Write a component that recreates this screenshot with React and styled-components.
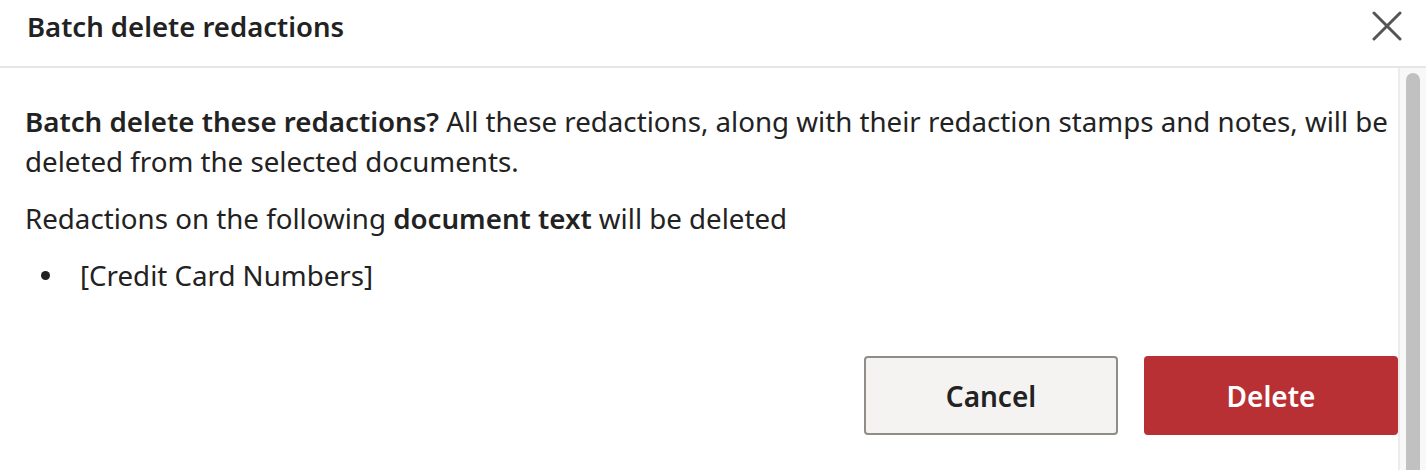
import * as React from 'react';
import styled, { createGlobalStyle } from 'styled-components';

const GlobalStyle = createGlobalStyle`
  html, body {
    margin: 0;
    padding: 0;
    background: #ffffff;
  }
  body {
    font-family: 'Noto Sans', 'Open Sans', sans-serif;
    color: #222222;
  }
`

const Dialog = styled.section`
  width: 1426px;
  height: 470px;
  display: flex;
  flex-direction: column;
  background: #ffffff;
  overflow: hidden;
`
const Header = styled.header`
  height: 68px;
  flex: none;
  display: flex;
  align-items: flex-start;
  justify-content: space-between;
  padding: 7px 22px 0 27px;
  box-sizing: border-box;
  border-bottom: 2px solid #e6e6e6;
`
const Title = styled.h2`
  margin: 0;
  font-size: 27.5px;
  line-height: 40px;
  font-weight: 600;
  color: #222222;
`
const CloseButton = styled.button`
  width: 34px;
  height: 34px;
  margin-top: 2px;
  padding: 0;
  border: 0;
  background: transparent;
  display: flex;
  align-items: center;
  justify-content: center;
  cursor: pointer;
`
const BodyRow = styled.div`
  flex: 1;
  display: flex;
  min-height: 0;
`
const Content = styled.div`
  flex: 1;
  padding: 33px 0 0 25px;
  display: flex;
  flex-direction: column;
`
const Paragraph = styled.p`
  margin: 0 0 17px;
  font-size: 27.7px;
  line-height: 40px;
  color: #222222;

  strong {
    font-weight: 600;
  }
`
const List = styled.ul`
  margin: 0;
  padding: 0;
  list-style: none;
  font-size: 27.7px;
  line-height: 40px;
`
const ListItem = styled.li`
  display: flex;
  align-items: center;
`
const Bullet = styled.span`
  width: 9px;
  height: 9px;
  margin: 0 30px 0 16px;
  border-radius: 50%;
  background: #222222;
  flex: none;
`
const Actions = styled.div`
  margin-top: 61px;
  display: flex;
  justify-content: flex-end;
  gap: 26px;
`
const Button = styled.button`
  width: 254px;
  height: 79px;
  border-radius: 4px;
  font-family: 'Noto Sans', 'Open Sans', sans-serif;
  font-size: 28px;
  font-weight: 600;
  cursor: pointer;
  border: 2px solid ${props => props.$primary ? '#b93034' : '#8f8d86'};
  background: ${props => props.$primary ? '#b93034' : '#f4f3f1'};
  color: ${props => props.$primary ? '#ffffff' : '#222222'};
`
const Scrollbar = styled.div`
  width: 26px;
  flex: none;
  border-left: 2px solid #ececec;
  background: #f8f8f8;
  display: flex;
  justify-content: center;
  padding-top: 5px;
`
const Thumb = styled.div`
  width: 14px;
  height: 600px;
  border-radius: 7px;
  background: #c1c1c1;
`

function App() {
  return (
    <>
      <GlobalStyle />
      <Dialog>
        <Header>
          <Title>Batch delete redactions</Title>
          <CloseButton aria-label="Close">
            <svg width="30" height="30" viewBox="0 0 30 30">
              <path d="M2 2 L28 28 M28 2 L2 28" stroke="#555555" strokeWidth="3" strokeLinecap="round" />
            </svg>
          </CloseButton>
        </Header>
        <BodyRow>
          <Content>
            <Paragraph>
              <strong>Batch delete these redactions?</strong> All these redactions, along with their redaction stamps and notes, will be deleted from the selected documents.
            </Paragraph>
            <Paragraph>
              Redactions on the following <strong>document text</strong> will be deleted
            </Paragraph>
            <List>
              <ListItem><Bullet />[Credit Card Numbers]</ListItem>
            </List>
            <Actions>
              <Button>Cancel</Button>
              <Button $primary>Delete</Button>
            </Actions>
          </Content>
          <Scrollbar>
            <Thumb />
          </Scrollbar>
        </BodyRow>
      </Dialog>
    </>
  );
}

export default App;
